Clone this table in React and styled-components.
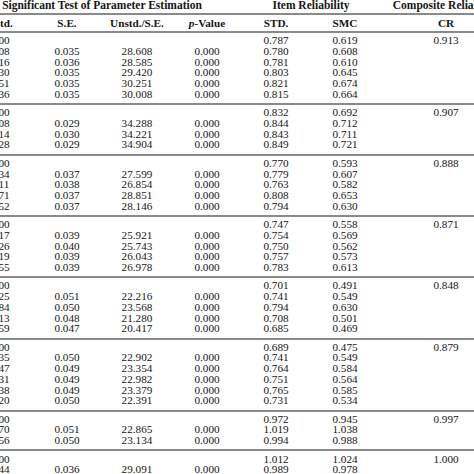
import styled, { createGlobalStyle } from "styled-components";

const GlobalStyle = createGlobalStyle`
  html, body {
    margin: 0;
    padding: 0;
    background: #ffffff;
  }
  body {
    font-family: "Liberation Serif", "Times New Roman", serif;
    color: #161616;
  }
`;

const Sheet = styled.div`
  width: 474px;
  height: 474px;
  overflow: hidden;
  background: #fff;
`;

const Row = styled.div`
  display: grid;
  grid-template-columns: 70px 70px 70px 70px 68px 70px 132px;
  width: 550px;
  margin-left: -38px;
  font-size: 11.2px;
`;

const TitleRow = styled(Row)`
  font-size: 11.5px;
  line-height: 11px;
  padding-bottom: 2.4px;
  border-bottom: 2px solid #8a8a8a;
  font-weight: bold;
`;

const HeadRow = styled(Row)`
  line-height: 10px;
  padding-top: 2.7px;
  padding-bottom: 3px;
  border-bottom: 2px solid #8a8a8a;
  font-weight: bold;
`;

const DataRow = styled(Row)`
  line-height: 10.7px;
`;

const Group = styled.div`
  padding-top: 2.2px;
  padding-bottom: 3.6px;
  border-bottom: ${(p) => (p.$last ? "none" : "2px solid #8a8a8a")};
`;

const Cell = styled.div`
  text-align: center;
  white-space: nowrap;
  grid-column: ${(p) => (p.$span ? `span ${p.$span}` : "auto")};
`;

const Italic = styled.i`
  font-style: italic;
`;

const groups = [
  {
    cr: "0.913",
    rows: [
      ["1.000", "", "", "", "0.787", "0.619"],
      ["1.008", "0.035", "28.608", "0.000", "0.780", "0.608"],
      ["1.016", "0.036", "28.585", "0.000", "0.781", "0.610"],
      ["1.030", "0.035", "29.420", "0.000", "0.803", "0.645"],
      ["1.051", "0.035", "30.251", "0.000", "0.821", "0.674"],
      ["1.036", "0.035", "30.008", "0.000", "0.815", "0.664"],
    ],
  },
  {
    cr: "0.907",
    rows: [
      ["1.000", "", "", "", "0.832", "0.692"],
      ["1.008", "0.029", "34.288", "0.000", "0.844", "0.712"],
      ["1.014", "0.030", "34.221", "0.000", "0.843", "0.711"],
      ["1.028", "0.029", "34.904", "0.000", "0.849", "0.721"],
    ],
  },
  {
    cr: "0.888",
    rows: [
      ["1.000", "", "", "", "0.770", "0.593"],
      ["1.034", "0.037", "27.599", "0.000", "0.779", "0.607"],
      ["1.011", "0.038", "26.854", "0.000", "0.763", "0.582"],
      ["1.071", "0.037", "28.851", "0.000", "0.808", "0.653"],
      ["1.052", "0.037", "28.146", "0.000", "0.794", "0.630"],
    ],
  },
  {
    cr: "0.871",
    rows: [
      ["1.000", "", "", "", "0.747", "0.558"],
      ["1.017", "0.039", "25.921", "0.000", "0.754", "0.569"],
      ["1.026", "0.040", "25.743", "0.000", "0.750", "0.562"],
      ["1.019", "0.039", "26.043", "0.000", "0.757", "0.573"],
      ["1.055", "0.039", "26.978", "0.000", "0.783", "0.613"],
    ],
  },
  {
    cr: "0.848",
    rows: [
      ["1.000", "", "", "", "0.701", "0.491"],
      ["1.125", "0.051", "22.216", "0.000", "0.741", "0.549"],
      ["1.184", "0.050", "23.568", "0.000", "0.794", "0.630"],
      ["1.013", "0.048", "21.280", "0.000", "0.708", "0.501"],
      ["0.959", "0.047", "20.417", "0.000", "0.685", "0.469"],
    ],
  },
  {
    cr: "0.879",
    rows: [
      ["1.000", "", "", "", "0.689", "0.475"],
      ["1.135", "0.050", "22.902", "0.000", "0.741", "0.549"],
      ["1.147", "0.049", "23.354", "0.000", "0.764", "0.584"],
      ["1.131", "0.049", "22.982", "0.000", "0.751", "0.564"],
      ["1.138", "0.049", "23.379", "0.000", "0.765", "0.585"],
      ["1.120", "0.050", "22.391", "0.000", "0.731", "0.534"],
    ],
  },
  {
    cr: "0.997",
    rows: [
      ["1.000", "", "", "", "0.972", "0.945"],
      ["1.170", "0.051", "22.865", "0.000", "1.019", "1.038"],
      ["1.156", "0.050", "23.134", "0.000", "0.994", "0.988"],
    ],
  },
  {
    cr: "1.000",
    rows: [
      ["1.000", "", "", "", "1.012", "1.024"],
      ["1.044", "0.036", "29.091", "0.000", "0.989", "0.978"],
      ["1.032", "0.035", "29.402", "0.000", "0.997", "0.994"],
    ],
  },
];

export default function App() {
  return (
    <>
      <GlobalStyle />
      <Sheet>
        <TitleRow>
          <Cell $span={4}>Significant Test of Parameter Estimation</Cell>
          <Cell $span={2}>Item Reliability</Cell>
          <Cell>Composite Reliability</Cell>
        </TitleRow>
        <HeadRow>
          <Cell>Unstd.</Cell>
          <Cell>S.E.</Cell>
          <Cell>Unstd./S.E.</Cell>
          <Cell>
            <Italic>p</Italic>-Value
          </Cell>
          <Cell>STD.</Cell>
          <Cell>SMC</Cell>
          <Cell>CR</Cell>
        </HeadRow>
        {groups.map((g, gi) => (
          <Group key={gi} $last={gi === groups.length - 1}>
            {g.rows.map((r, ri) => (
              <DataRow key={ri}>
                {r.map((v, ci) => (
                  <Cell key={ci}>{v}</Cell>
                ))}
                <Cell>{ri === 0 ? g.cr : ""}</Cell>
              </DataRow>
            ))}
          </Group>
        ))}
      </Sheet>
    </>
  );
}
